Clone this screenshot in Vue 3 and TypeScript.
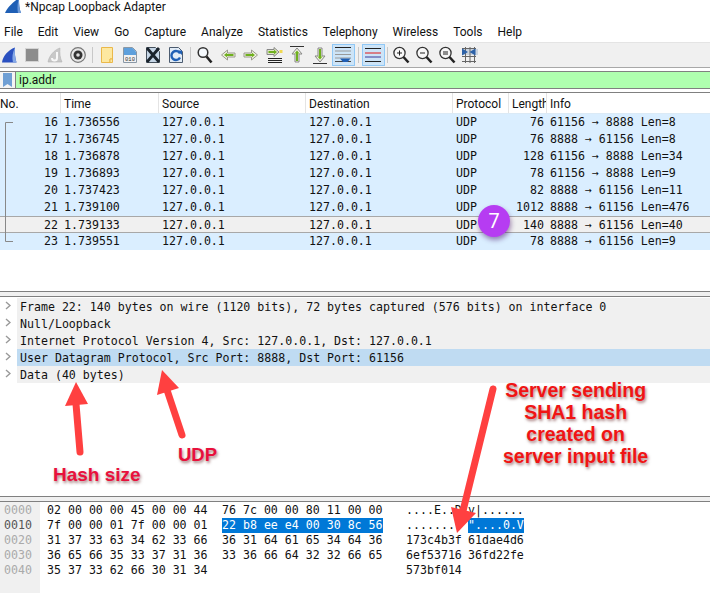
<script setup lang="ts">
interface Pkt { no: number; time: string; len: number; info: string; sel?: boolean }
const packets: Pkt[] = [
  { no: 16, time: '1.736556', len: 76, info: '61156 → 8888 Len=8' },
  { no: 17, time: '1.736745', len: 76, info: '8888 → 61156 Len=8' },
  { no: 18, time: '1.736878', len: 128, info: '61156 → 8888 Len=34' },
  { no: 19, time: '1.736893', len: 78, info: '61156 → 8888 Len=9' },
  { no: 20, time: '1.737423', len: 82, info: '8888 → 61156 Len=11' },
  { no: 21, time: '1.739100', len: 1012, info: '8888 → 61156 Len=476' },
  { no: 22, time: '1.739133', len: 140, info: '8888 → 61156 Len=40', sel: true },
  { no: 23, time: '1.739551', len: 78, info: '8888 → 61156 Len=9' },
]
const menus = ['File', 'Edit', 'View', 'Go', 'Capture', 'Analyze', 'Statistics', 'Telephony', 'Wireless', 'Tools', 'Help']
const details = [
  'Frame 22: 140 bytes on wire (1120 bits), 72 bytes captured (576 bits) on interface 0',
  'Null/Loopback',
  'Internet Protocol Version 4, Src: 127.0.0.1, Dst: 127.0.0.1',
  'User Datagram Protocol, Src Port: 8888, Dst Port: 61156',
  'Data (40 bytes)',
]
const hex = [
  { off: '0000', a: '02 00 00 00 45 00 00 44', b: '76 7c 00 00 80 11 00 00', t1: '....E..D', t2: 'v|......' },
  { off: '0010', a: '7f 00 00 01 7f 00 00 01', b: '22 b8 ee e4 00 30 8c 56', t1: '........', t2: '"....0.V', sel: true },
  { off: '0020', a: '31 37 33 63 34 62 33 66', b: '36 31 64 61 65 34 64 36', t1: '173c4b3f', t2: '61dae4d6' },
  { off: '0030', a: '36 65 66 35 33 37 31 36', b: '33 36 66 64 32 32 66 65', t1: '6ef53716', t2: '36fd22fe' },
  { off: '0040', a: '35 37 33 62 66 30 31 34', b: '', t1: '573bf014', t2: '' },
]
</script>

<template>
  <div class="app">
    <div class="title">
      <svg class="logo" width="18" height="13" viewBox="0 0 18 13"><path d="M1 13C3 8 9 2 15-2c0 5 0 10 2 15z" fill="#1f5fb5" /><path d="M15-2c0 5 0 10 2 15h-3c-1-5-.5-10 1-15z" fill="#6f9bd8" /></svg>
      <span>*Npcap Loopback Adapter</span>
    </div>
    <div class="menu"><span v-for="m in menus" :key="m">{{ m }}</span></div>
    <div class="toolbar">
      <span class="tb first"><svg width="18" height="18" viewBox="0 0 18 18"><path d="M2 16.500C3 10 8 4 15 1.500c-.5 5 0 10 1.500 15z" fill="#2a50c0" /><path d="M15 1.500c-.5 5 0 10 1.500 15h-3.500c-1.200-5-.5-10 2-15z" fill="#86a9e6" /></svg></span>
      <span class="tb"><svg width="18" height="18" viewBox="0 0 18 18"><rect x="2.500" y="2.500" width="13" height="13" fill="#8c8c8c" stroke="#d4d4d4" /></svg></span>
      <span class="tb"><svg width="18" height="18" viewBox="0 0 18 18"><path d="M2 16C3 10 8 4 14 2c-.5 5 0 10 2 14z" fill="#c8c8c8" stroke="#b4b4b4" stroke-width=".6" /><path d="M11 6v6a2.500 2.500 0 0 1-5 0" fill="none" stroke="#f8f8f8" stroke-width="2" /></svg></span>
      <span class="tb"><svg width="18" height="18" viewBox="0 0 18 18"><circle cx="9" cy="9" r="7.300" fill="#e8e8e8" stroke="#777" stroke-width="1.200" /><circle cx="9" cy="9" r="4.500" fill="#333" /><circle cx="9" cy="9" r="1.800" fill="#ddd" /></svg></span>
      <i class="sep" />
      <span class="tb"><svg width="18" height="20" viewBox="0 0 18 20"><path d="M3.500 2.500h11v11.500h-2.500v3.500H3.500z" fill="#fde8a0" stroke="#eab84a" /><path d="M12 14h2.500v3.500H12z" fill="#fde8a0" stroke="#eab84a" /></svg></span>
      <span class="tb"><svg width="18" height="18" viewBox="0 0 18 18"><path d="M2.500 1.500h9l4 4v11h-13z" fill="#f2f2f2" stroke="#8a98a6" /><path d="M3 2h8.500l3.500 3.500V9H3z" fill="#5ea0dc" /><text x="9" y="15" font-size="5.500" text-anchor="middle" font-family="Liberation Mono" fill="#333">010</text></svg></span>
      <span class="tb"><svg width="18" height="18" viewBox="0 0 18 18"><path d="M2.500 1.500h9l4 4v11h-13z" fill="#c6d6e6" stroke="#44505c" /><path d="M3 2l12 14M15 2L3 16" stroke="#1a232c" stroke-width="2.800" /></svg></span>
      <span class="tb"><svg width="18" height="18" viewBox="0 0 18 18"><path d="M2.500 1.500h9l4 4v11h-13z" fill="#e2ecf6" stroke="#4c5c70" /><path d="M13 7.500a4.500 4.500 0 1 0 0 4" fill="none" stroke="#1f5fb5" stroke-width="2.400" /><path d="M10 4.500h5v4.500z" fill="#1f5fb5" /></svg></span>
      <i class="sep" />
      <span class="tb"><svg width="18" height="18" viewBox="0 0 18 18"><circle cx="7" cy="6.500" r="4.800" fill="#f4f8fc" stroke="#333" stroke-width="1.500" /><path d="M10.500 10.500l5 6" stroke="#222" stroke-width="2.600" /></svg></span>
      <span class="tb"><svg width="18" height="18" viewBox="0 0 18 18"><path d="M2.500 9l6-5v3h7.500v4H8.500v3z" fill="#efefe2" stroke="#9a9a8c" /><path d="M5 9l3-2.300v1.300h6.500v2H8v1.300z" fill="#6fb01e" /></svg></span>
      <span class="tb"><svg width="18" height="18" viewBox="0 0 18 18"><path d="M15.500 9l-6-5v3H2v4h7.500v3z" fill="#efefe2" stroke="#9a9a8c" /><path d="M13 9l-3-2.300v1.300H3.500v2H10v1.300z" fill="#6fb01e" /></svg></span>
      <span class="tb"><svg width="18" height="18" viewBox="0 0 18 18"><path d="M3 12.500h14M3 14.500h14M3 16.500h14" stroke="#222" /><path d="M14 6l-5-4.500V3.500H2v5h7v2z" fill="#dfe6c8" stroke="#888" /><path d="M12 6L9 3.800v1.200H3.500v2H9v1.200z" fill="#6fb01e" /><rect x="14.500" y="4" width="3" height="3" fill="#f0d850" /></svg></span>
      <span class="tb"><svg width="18" height="20" viewBox="0 0 18 20"><path d="M2 1.500h14" stroke="#333" /><path d="M9 3l5 6h-3v8H7V9H4z" fill="#efefe2" stroke="#888" /><path d="M9 5.500L11.500 8.500H10V16H8V8.500H6.500z" fill="#6fb01e" /></svg></span>
      <span class="tb"><svg width="18" height="20" viewBox="0 0 18 20"><path d="M2 18.500h14" stroke="#333" /><path d="M9 17l5-6h-3V3H7v8H4z" fill="#efefe2" stroke="#888" /><path d="M9 14.500l2.500-3H10V4H8v7.500H6.500z" fill="#6fb01e" /></svg></span>
      <span class="tb on"><svg width="18" height="18" viewBox="0 0 18 18"><path d="M1 1.500h16" stroke="#222" /><path d="M1 5h16M1 8.500h16M1 12h16" stroke="#999" /><path d="M1 15.500h16" stroke="#444" /><path d="M6 12.500h10.500l-3 3.500h-4.500z" fill="#1f5fb5" /></svg></span>
      <i class="sep wide" />
      <span class="tb on"><svg width="18" height="18" viewBox="0 0 18 18"><path d="M1 2.500h16" stroke="#222" /><path d="M1 7h16" stroke="#e01818" /><path d="M1 11h16" stroke="#3a3a9a" /><path d="M1 15.500h16" stroke="#222" /></svg></span>
      <i class="sep thin" />
      <span class="tb"><svg width="18" height="18" viewBox="0 0 18 18"><circle cx="7.500" cy="7" r="5.600" fill="#f8f8f8" stroke="#333" stroke-width="1.300" /><path d="M5 7h5M7.500 4.500v5" stroke="#222" /><path d="M11.500 11l5 5.500" stroke="#222" stroke-width="2.500" /></svg></span>
      <span class="tb"><svg width="18" height="18" viewBox="0 0 18 18"><circle cx="7.500" cy="7" r="5.600" fill="#f8f8f8" stroke="#333" stroke-width="1.300" /><path d="M5 7h5" stroke="#222" /><path d="M11.500 11l5 5.500" stroke="#222" stroke-width="2.500" /></svg></span>
      <span class="tb"><svg width="18" height="18" viewBox="0 0 18 18"><circle cx="7.500" cy="7" r="5.600" fill="#f8f8f8" stroke="#333" stroke-width="1.300" /><path d="M5 6h5M5 8h5" stroke="#222" /><path d="M11.500 11l5 5.500" stroke="#222" stroke-width="2.500" /></svg></span>
      <span class="tb"><svg width="18" height="18" viewBox="0 0 18 18"><rect x="1" y="3" width="16" height="6" fill="#c9d3de" /><path d="M1 2.500h14M1 10.500h14M1 15.500h14M4.500 1v16M9 1v16M13.500 1v16" stroke="#666" /><path d="M1 2.500l6 3.500-6 3.500zM14.500 2.500l-6 3.500 6 3.500z" fill="#2d62a8" /></svg></span>
    </div>
    <div class="filter">
      <span class="mark"><svg width="9" height="14" viewBox="0 0 9 14"><path d="M0 0h9v14L4.500 11 0 14z" fill="#6f9fd4" /></svg></span>
      <span class="finput">ip.addr</span>
    </div>
    <div class="row head">
      <span>No.</span><span>Time</span><span>Source</span><span>Destination</span><span>Protocol</span><span>Length</span><span>Info</span>
    </div>
    <div class="list">
      <div v-for="p in packets" :key="p.no" class="row pkt" :class="{ sel: p.sel }">
        <span class="r">{{ p.no }}</span><span>{{ p.time }}</span><span>127.0.0.1</span><span>127.0.0.1</span><span>UDP</span><span class="r">{{ p.len }}</span><span>{{ p.info }}</span>
      </div>
      <svg class="bracket" width="13" height="120" viewBox="0 0 13 120"><path d="M13 .5H5.500V119.500H13" fill="none" stroke="#888" /></svg>
    </div>
    <div class="gap1" />
    <div class="split" />
    <div class="details">
      <div v-for="(d, i) in details" :key="d" class="dline">
        <svg class="chev" width="6" height="9" viewBox="0 0 6 9"><path d="M1 1l4 3.500L1 8" fill="none" stroke="#999" stroke-width="1.400" /></svg>
        <span class="dtext" :class="{ hi: i === 3 }">{{ d }}</span>
      </div>
    </div>
    <div class="gap2" />
    <div class="split" />
    <div class="hex">
      <div v-for="(h, i) in hex" :key="h.off" class="hline">
        <span class="off" :class="{ dark: i === 1 }">{{ h.off }}</span>
        <span class="a">{{ h.a }}</span>
        <span class="b"><span :class="{ blue: h.sel }">{{ h.b }}</span></span>
        <span class="t1">{{ h.t1 }}</span>
        <span class="t2"><span :class="{ blue: h.sel }">{{ h.t2 }}</span></span>
      </div>
    </div>
    <div class="badge">7</div>
    <svg class="arrows" width="710" height="593" viewBox="0 0 710 593">
      <g fill="none" stroke="#ff4040" stroke-width="7" stroke-linecap="round">
        <path d="M80 452L76 404" />
        <path d="M182 435L166 387" />
        <path d="M493 389L462 515" />
      </g>
      <g fill="#ff4040">
        <path d="M76 382L88 404 65 406z" />
        <path d="M162 370L179 388 157 395z" />
        <path d="M457 533L451 507 476 513z" />
      </g>
    </svg>
    <span class="note hash">Hash size</span>
    <span class="note udp">UDP</span>
    <span class="note server">Server sending<br />SHA1 hash<br />created on<br />server input file</span>
  </div>
</template>

<style>
html, body { margin: 0; background: #fff; }
</style>

<style scoped>
.app { position: relative; width: 710px; height: 593px; overflow: hidden; background: #fff; font-family: Roboto, sans-serif; color: #111; }
.title { height: 22px; display: flex; align-items: flex-start; gap: 3px; padding-left: 4px; font-size: 12px; line-height: 14px; }
.logo { flex: none; }
.menu { height: 20px; display: flex; align-items: center; font-size: 12px; padding-left: 4px; gap: 15px; }
.toolbar { height: 24px; background: #f0f0f0; border-top: 1px solid #e4e4e4; border-bottom: 1px solid #a8a8a8; display: flex; align-items: center; }
.tb { width: 23px; height: 22px; flex: none; display: flex; align-items: center; justify-content: center; box-sizing: border-box; }
.tb.first { margin-left: -2.500px; }
.tb.on { background: #cde4f7; border: 1px solid #90c8f6; }
.sep { width: 1px; height: 16px; background: #c8c8c8; margin: 0 2.500px; flex: none; }
.sep.wide { margin: 0 3px; }
.sep.thin { margin: 0 2px; }
.filter { margin-top: 3px; height: 16px; display: flex; border-top: 1px solid #808080; border-bottom: 1px solid #808080; background: #afffaf; }
.mark { width: 16px; box-sizing: border-box; background: #f4f4f4; border-right: 1px solid #808080; display: flex; align-items: center; justify-content: center; }
.finput { padding-left: 3px; font-size: 12px; line-height: 16px; }
.row { display: grid; grid-template-columns: 61px 98px 147px 147px 56px 38px 1fr; }
.head { margin-top: 3px; height: 22px; border-top: 1px solid #808080; font-size: 12px; line-height: 22px; border-bottom: 1px solid #dbeaf6; box-sizing: border-box; }
.head span { border-right: 1px solid #e4e4e4; overflow: hidden; white-space: nowrap; padding-left: 3px; height: 20px; }
.head span:first-child { padding-left: 0; }
.head span:last-child { border-right: 0; }
.list { position: relative; }
.pkt { height: 17px; background: #daeeff; font: 11.600px/17px "DejaVu Sans Mono", monospace; }
.pkt span { padding-left: 3px; white-space: nowrap; }
.pkt span.r { text-align: right; padding-right: 3px; padding-left: 0; }
.pkt.sel { background: #f0f0f0; box-shadow: inset 0 1px #a8a8a8, inset 0 -1px #a8a8a8; line-height: 19px; }
.bracket { position: absolute; left: 0; top: 8px; }
.gap1 { height: 41px; }
.split { height: 4px; border-top: 1px solid #808080; border-bottom: 1px solid #808080; background: #f0f0f0; }
.details { margin-top: 1px; }
.dline { height: 17px; display: flex; align-items: center; }
.chev { margin: 0 6px 2px 5px; flex: none; }
.dtext { flex: 1; height: 17px; background: #f0f0f0; font: 11.600px/19px "DejaVu Sans Mono", monospace; padding-left: 3px; white-space: nowrap; overflow: hidden; }
.dtext.hi { background: #bfdbf2; }
.gap2 { height: 113px; }
.hex { font: 11.600px/15px "DejaVu Sans Mono", monospace; height: 91px; background: linear-gradient(90deg, #f0f0f0 40px, #fff 40px); padding-top: 1px; box-sizing: border-box; }
.hline { height: 15px; display: flex; white-space: pre; }
.off { width: 47px; padding-left: 4px; box-sizing: border-box; color: #aaa; }
.off.dark { color: #555; }
.a { width: 175px; }
.b { width: 184px; }
.t1 { width: 62px; }
.t2 { width: 57px; }
.blue { background: #0078d7; color: #fff; display: inline-block; }
.badge { position: absolute; left: 478px; top: 205px; width: 32px; height: 32px; border-radius: 50%; background: #b63cf2; color: #fff; font-size: 20px; line-height: 32px; text-align: center; box-shadow: 1px 3px 5px rgba(60, 0, 90, .45); }
.arrows { position: absolute; left: 0; top: 0; pointer-events: none; }
.note { position: absolute; font-family: "Liberation Sans", sans-serif; font-weight: 700; text-align: center; text-shadow: 1px 2px 3px rgba(80, 0, 0, .5); white-space: nowrap; }
.hash { left: 53px; top: 464px; font-size: 19px; color: #e8103c; }
.udp { left: 178px; top: 444px; font-size: 18.500px; color: #e8103c; }
.server { left: 503px; top: 379px; font-size: 19.500px; line-height: 22px; color: #f01414; }
</style>
